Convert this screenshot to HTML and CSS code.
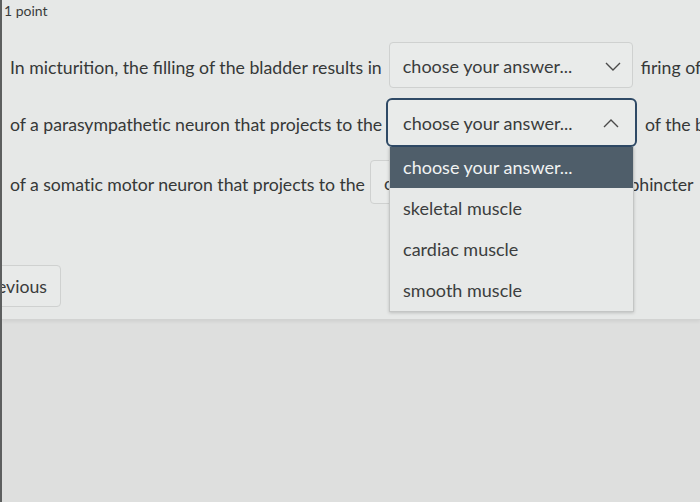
FILE: index.html
```html
<!DOCTYPE html>
<html>
<head>
<meta charset="utf-8">
<link rel="stylesheet" href="styles.css">
</head>
<body>
<div class="frame">
  <div class="card">
    <div class="points">1 point</div>
    <div class="question">
      <div class="row row1">
        <span class="txt">In micturition, the filling of the bladder results in</span>
        <div class="select">
          <span>choose your answer...</span>
          <svg class="chev" width="16" height="9" viewBox="0 0 16 9"><path d="M1 1 L8 8 L15 1" fill="none" stroke="#4a4a4a" stroke-width="1.4"/></svg>
        </div>
        <span class="txt">firing of</span>
      </div>
      <div class="row row2">
        <span class="txt">of a parasympathetic neuron that projects to the</span>
        <div class="select focused">
          <span>choose your answer...</span>
          <svg class="chev" width="16" height="9" viewBox="0 0 16 9"><path d="M1 8 L8 1 L15 8" fill="none" stroke="#4a4a4a" stroke-width="1.4"/></svg>
          <ul class="menu">
            <li class="active">choose your answer...</li>
            <li>skeletal muscle</li>
            <li>cardiac muscle</li>
            <li>smooth muscle</li>
          </ul>
        </div>
        <span class="txt">of the b</span>
      </div>
      <div class="row row3">
        <span class="txt">of a somatic motor neuron that projects to the</span>
        <div class="select">
          <span>choose your answer...</span>
          <svg class="chev" width="16" height="9" viewBox="0 0 16 9"><path d="M1 1 L8 8 L15 1" fill="none" stroke="#4a4a4a" stroke-width="1.4"/></svg>
        </div>
        <span class="txt">sphincter</span>
      </div>
    </div>
    <div class="nav">
      <button class="prev">Previous</button>
    </div>
  </div>
</div>
</body>
</html>
```

FILE: styles.css
```css
html, body {
  margin: 0;
  padding: 0;
}
body {
  width: 700px;
  height: 502px;
  overflow: hidden;
  background: #dedfde;
  font-family: Lato, "Open Sans", sans-serif;
  color: #363838;
}
.frame {
  height: 502px;
  border-left: 2px solid #5d5f5f;
  box-sizing: border-box;
  overflow: hidden;
}
.card {
  height: 320px;
  background: #e6e8e7;
  border-bottom: 1px solid #d2d3d2;
  box-shadow: 0 2px 3px rgba(0,0,0,0.06);
  padding: 3px 0 0 2px;
  box-sizing: border-box;
  position: relative;
  z-index: 1;
}
.points {
  font-size: 14px;
  line-height: 16px;
  color: #3a3c3c;
}
.question {
  margin-top: 23px;
  padding-left: 6px;
}
.row {
  display: flex;
  align-items: center;
  white-space: nowrap;
  gap: 8px;
  font-size: 17.7px;
}
.row .txt { position: relative; top: 2px; }
.row1 { height: 46px; }
.row2 { height: 50px; margin-top: 9px; letter-spacing: -0.05px; }
.row3 { height: 44px; margin-top: 13px; letter-spacing: -0.06px; }
.select {
  position: relative;
  flex: none;
  width: 244px;
  height: 46px;
  box-sizing: border-box;
  border: 1px solid #cfd1d0;
  border-radius: 4px;
  background: #e9ebea;
  display: flex;
  align-items: center;
  justify-content: space-between;
  padding: 2px 11px 0 13px;
  color: #3a3c3c;
  font-size: 18px;
  letter-spacing: 0;
}
.row1 .select { margin-left: -1px; }
.row3 .select { height: 44px; margin-left: -3px; }
.select.focused {
  width: 251px;
  height: 49px;
  margin-left: -4px;
  border: 2px solid #2f4a66;
  border-radius: 6px;
  padding-left: 15px;
  padding-right: 16px;
}
.chev { display: block; }
.menu {
  position: absolute;
  left: 1px;
  top: 47px;
  width: 243px;
  margin: 0;
  padding: 0;
  list-style: none;
  background: #e7e9e8;
  border: 1px solid #c4c6c5;
  border-top: none;
  box-shadow: 0 1px 3px rgba(0,0,0,0.18);
  z-index: 5;
}
.menu li {
  height: 41px;
  line-height: 41px;
  padding-left: 13px;
  color: #3c3e3e;
}
.menu li.active {
  background: #4f5e6a;
  color: #f1f3f3;
}
.nav {
  margin-top: 61px;
}
.prev {
  margin-left: -33px;
  height: 42px;
  width: 90px;
  box-sizing: border-box;
  border: 1px solid #cfd1d0;
  border-radius: 4px;
  background: #e8eae9;
  font-family: Lato, "Open Sans", sans-serif;
  font-size: 17.7px;
  color: #3a3c3c;
  padding: 0 13px 0 0;
  text-align: right;
}
```
